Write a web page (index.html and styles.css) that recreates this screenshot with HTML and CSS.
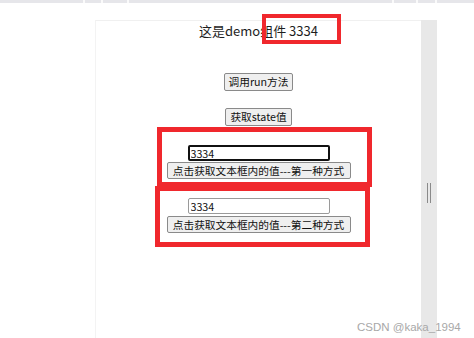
FILE: index.html
```html
<!DOCTYPE html>
<html>
<head>
<meta charset="utf-8">
<link rel="stylesheet" href="styles.css">
</head>
<body>
<div class="page">
  <div class="topbar">
    <span class="seg s1"></span><span class="seg s2"></span><span class="seg s3"></span><span class="seg s4"></span><span class="seg s5"></span><span class="seg s6"></span>
  </div>
  <div class="stage">
    <div class="panel">
      <div class="title">这是demo组件 3334</div>
      <button class="btn first">调用run方法</button>
      <button class="btn second">获取state值</button>
      <div class="group g1">
        <input class="field focused" type="text" value="3334">
        <button class="btn wide">点击获取文本框内的值---第一种方式</button>
      </div>
      <div class="group g2">
        <input class="field" type="text" value="3334">
        <button class="btn wide">点击获取文本框内的值---第二种方式</button>
      </div>
    </div>
    <div class="scrollbar"><span class="grip"></span></div>
  </div>
  <div class="mark m-title"></div>
  <div class="mark m-one"></div>
  <div class="mark m-two"></div>
  <div class="watermark">CSDN @kaka_1994</div>
</div>
</body>
</html>
```
FILE: styles.css
```css
html, body {
  margin: 0;
  padding: 0;
  background: #ffffff;
}
.page {
  position: relative;
  width: 474px;
  height: 338px;
  overflow: hidden;
  font-family: "Noto Sans CJK SC", "Noto Sans", sans-serif;
  color: #222;
}
.topbar {
  height: 3px;
  background: #e6e6ea;
  display: flex;
}
.seg {
  display: block;
  height: 3px;
  width: 2px;
  background: #fafafa;
}
.s1 { margin-left: 83px; }
.s2 { margin-left: 16px; }
.s3 { margin-left: 24px; }
.s4 { margin-left: 263px; }
.s5 { margin-left: 22px; }
.s6 { margin-left: 17px; }
.stage {
  display: flex;
  margin-top: 17px;
  margin-left: 95px;
  height: 318px;
}
.panel {
  width: 326px;
  box-sizing: border-box;
  border-top: 1px solid #f0f0f0;
  border-left: 1px solid #f3f3f3;
  display: flex;
  flex-direction: column;
  align-items: center;
}
.scrollbar {
  width: 16px;
  background: #e8e8e8;
  display: flex;
  justify-content: center;
  padding-top: 163px;
  box-sizing: border-box;
}
.grip {
  display: block;
  width: 2px;
  height: 20px;
  border-left: 1px solid #8a8a8a;
  border-right: 1px solid #8a8a8a;
}
.title {
  font-size: 13px;
  line-height: 19px;
  color: #1e1e1e;
}
.btn {
  font-family: "Noto Sans CJK SC", "Noto Sans", sans-serif;
  font-size: 10.7px;
  line-height: 14px;
  padding: 1px 4px;
  margin: 0;
  color: #111;
  background: #efefef;
  border: 1px solid #8a8a8a;
  border-radius: 2px;
}
.first { margin-top: 33px; height: 18px; }
.second { margin-top: 17px; height: 18px; }
.group {
  display: flex;
  flex-direction: column;
  align-items: center;
}
.g1 { margin-top: 19px; }
.g2 { margin-top: 19px; }
.field {
  box-sizing: border-box;
  width: 142px;
  height: 16px;
  margin: 0;
  padding: 0 2px;
  font-family: "Noto Sans CJK SC", "Noto Sans", sans-serif;
  font-size: 10.7px;
  color: #111;
  border: 1px solid #9a9a9a;
  border-radius: 2px;
  background: #fff;
}
.focused {
  border: 2px solid #111;
  padding: 0 1px;
}
.wide {
  width: 184px;
  height: 17px;
  line-height: 13px;
  padding: 1px 2px;
  margin-top: 1px;
}
.g2 .wide { margin-top: 2px; }
.mark {
  position: absolute;
  box-sizing: border-box;
  border: 4px solid #f0282d;
}
.m-title {
  left: 262px;
  top: 14px;
  width: 79px;
  height: 30px;
}
.m-one {
  left: 157px;
  top: 127px;
  width: 215px;
  height: 60px;
  border-width: 5px;
}
.m-two {
  left: 155px;
  top: 186px;
  width: 215px;
  height: 61px;
  border-width: 5px;
}
.watermark {
  position: absolute;
  left: 357px;
  top: 320px;
  font-family: "Liberation Sans", Arial, sans-serif;
  font-size: 11.5px;
  line-height: 14px;
  color: #a8a8a8;
}
```
